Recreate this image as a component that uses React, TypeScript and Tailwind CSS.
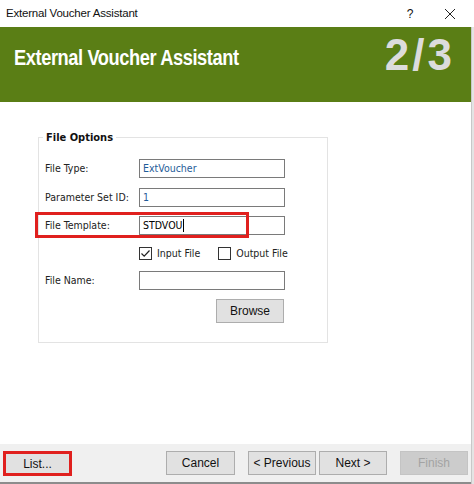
import React from 'react';

const ui = { fontFamily: '"Liberation Sans", Arial, sans-serif' };
const form = { fontFamily: '"DejaVu Sans Condensed", "Liberation Sans", Arial, sans-serif' };

const Field = ({ value, color = 'text-[#1f5c99]', caret = false }: { value?: string; color?: string; caret?: boolean }) => (
  <div className={`w-[146px] h-[19px] border border-[#7a7a7a] bg-white flex items-center pl-[3px] text-[10.5px] ${color}`}>
    {value}
    {caret && <span className="inline-block w-px h-[13px] bg-black ml-px"></span>}
  </div>
);

const Check = ({ checked, label }: { checked?: boolean; label: string }) => (
  <div className="flex items-center gap-[5px]">
    <div className="w-[13px] h-[13px] border border-[#333] bg-white flex items-center justify-center">
      {checked && (
        <svg width="11" height="11" viewBox="0 0 11 11">
          <path d="M1.5 5.5 L4.2 8.2 L9.5 2.5" fill="none" stroke="#222" strokeWidth="1.2" />
        </svg>
      )}
    </div>
    <span>{label}</span>
  </div>
);

const Btn = ({ label, w = 'w-[69px]', disabled = false }: { label: string; w?: string; disabled?: boolean }) => (
  <div
    className={`${w} h-[24px] flex items-center justify-center border text-[12px] ${
      disabled ? 'border-[#c4c4c4] bg-[#cccccc] text-[#a3a3a3]' : 'border-[#adadad] bg-[#e1e1e1] text-[#111]'
    }`}
  >
    {label}
  </div>
);

const App = () => (
  <div className="w-[474px] h-[484px] flex flex-col bg-white overflow-hidden" style={ui}>
    {/* title bar */}
    <div className="h-[27px] flex items-center pl-[6px] text-[11.5px] text-[#111]">
      <span className="flex-1 tracking-[-0.2px]">External Voucher Assistant</span>
      <span className="w-[20px] text-[12px] mr-[24px] text-center">?</span>
      <svg width="12" height="12" viewBox="0 0 12 12" className="mr-[18px]">
        <path d="M1 1 L11 11 M11 1 L1 11" stroke="#222" strokeWidth="1" />
      </svg>
    </div>

    <div className="flex-1 flex">
      <div className="flex-1 flex flex-col">
        {/* banner */}
        <div className="h-[75px] bg-[#5a7e15] flex justify-between pl-[14px] pr-[16px]">
          <h1 className="mt-[14px] text-[22px] font-bold text-white tracking-[-0.5px] whitespace-nowrap origin-left scale-x-[0.83]">
            External Voucher Assistant
          </h1>
          <div className="mt-[-5px] text-[44px] font-bold text-[#dcdcdc] tracking-[3px]">2/3</div>
        </div>

        {/* content */}
        <div className="flex-1 pl-[38px] pt-[35px]">
          <div className="relative w-[290px] h-[206px] border border-[#e3e3e3] pl-[6px] pt-[21px] text-[10.5px] text-[#222]" style={form}>
            <span className="absolute top-[-8px] left-[4px] bg-white px-[3px] font-bold text-[11px] text-[#111]">File Options</span>

            <div className="flex items-center h-[19px]">
              <span className="w-[94px]">File Type:</span>
              <Field value="ExtVoucher" />
            </div>
            <div className="flex items-center h-[19px] mt-[10px]">
              <span className="w-[94px]">Parameter Set ID:</span>
              <Field value="1" />
            </div>
            <div className="relative flex items-center h-[19px] mt-[9px]">
              <span className="w-[94px]">File Template:</span>
              <Field value="STDVOU" color="text-black" caret />
              <div className="absolute left-[-10px] top-[-4px] w-[214px] h-[26px] border-[3px] border-[#e0201e]"></div>
            </div>
            <div className="flex items-center h-[19px] mt-[9px] pl-[94px] gap-[18px]">
              <Check checked label="Input File" />
              <Check label="Output File" />
            </div>
            <div className="flex items-center h-[19px] mt-[8px]">
              <span className="w-[94px]">File Name:</span>
              <Field />
            </div>
            <div className="flex mt-[9px] pl-[171px]" style={ui}>
              <Btn label="Browse" w="w-[68px]" />
            </div>
          </div>
        </div>

        {/* footer */}
        <div className="h-[38px] bg-[#f0f0f0] flex items-start pt-[7px] pl-[3px]">
          <div className="border-[3px] border-[#e0201e]">
            <div className="w-[63px] h-[19px] flex items-center justify-center bg-[#e1e1e1] text-[12px] text-[#111]">List...</div>
          </div>
          <div className="ml-[94px] flex">
            <Btn label="Cancel" />
            <div className="ml-[13px]">
              <Btn label="< Previous" w="w-[68px]" />
            </div>
            <div className="ml-[3px]">
              <Btn label="Next >" w="w-[68px]" />
            </div>
            <div className="ml-[13px]">
              <Btn label="Finish" w="w-[68px]" disabled />
            </div>
          </div>
        </div>
        <div className="h-[2px] bg-[#8c8c8c]"></div>
      </div>
      <div className="w-[3px] bg-[#e4e4e4] border-l border-[#c8c8c8]"></div>
    </div>
  </div>
);

export default App;
